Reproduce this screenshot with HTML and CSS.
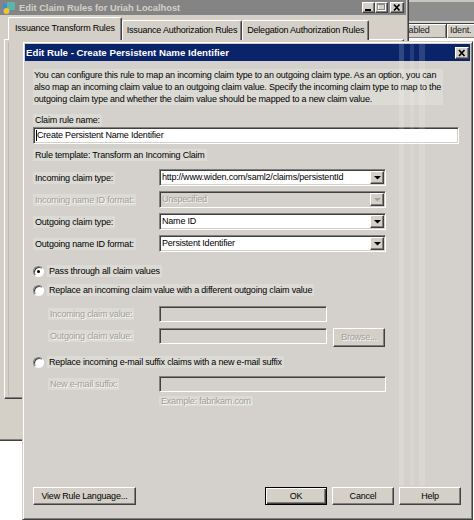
FILE: index.html
```html
<!DOCTYPE html>
<html>
<head>
<meta charset="utf-8">
<link rel="stylesheet" href="styles.css">
</head>
<body>
<div class="desk">
  <div class="win2">
    <div class="w2-title"></div>
    <div class="w2-sep"></div>
    <div class="lv-head">
      <span class="lv-col c-name"></span>
      <span class="lv-col c-en">Enabled</span>
      <span class="lv-col c-id">Ident.</span>
    </div>
  </div>

  <div class="win1">
    <div class="w1-title">
      <svg class="appicon" width="14" height="14" viewBox="0 0 14 14">
        <rect x="1" y="3" width="8" height="9" rx="1" fill="#3a8fd9"/>
        <rect x="5" y="1" width="8" height="8" rx="1" fill="#5fb4a8"/>
        <circle cx="4.5" cy="10" r="3" fill="#f2c230"/>
      </svg>
      <span class="w1-caption">Edit Claim Rules for Uriah Localhost</span>
      <span class="caps">
        <span class="capbtn"><svg width="11" height="9" viewBox="0 0 11 9"><rect x="2" y="6" width="6" height="2" fill="#000"/></svg></span>
        <span class="capbtn"><svg width="11" height="9" viewBox="0 0 11 9"><rect x="2.5" y="1.5" width="7" height="6" fill="none" stroke="#fff"/><rect x="1.5" y="0.5" width="7" height="6" fill="none" stroke="#8a8a8a"/><rect x="1" y="0" width="8" height="2" fill="#8a8a8a"/></svg></span>
        <span class="capbtn cl"><svg width="12" height="9" viewBox="0 0 12 9"><path d="M3 1.5 L8.5 7.5 M8.5 1.5 L3 7.5" stroke="#000" stroke-width="1.7"/></svg></span>
      </span>
    </div>
    <div class="w1-body">
      <div class="tabs">
        <span class="tab sel">Issuance Transform Rules</span>
        <span class="tab">Issuance Authorization Rules</span>
        <span class="tab">Delegation Authorization Rules</span>
      </div>
      <div class="tabpage"><div class="tabinner"></div></div>
    </div>
  </div>

  <div class="dlg">
    <div class="dlg-title">
      <span class="dlg-caption">Edit Rule - Create Persistent Name Identifier</span>
      <span class="capbtn x"><svg width="12" height="10" viewBox="0 0 12 10"><path d="M3 2 L8.5 8 M8.5 2 L3 8" stroke="#000" stroke-width="1.7"/></svg></span>
    </div>
    <div class="dlg-body">
      <p class="desc lbl">You can configure this rule to map an incoming claim type to an outgoing claim type. As an option, you can<br>also map an incoming claim value to an outgoing claim value. Specify the incoming claim type to map to the<br>outgoing claim type and whether the claim value should be mapped to a new claim value.</p>

      <div class="lbl blk l-name">Claim rule name:</div>
      <div class="edit e-name sunken"><span class="caret"></span>Create Persistent Name Identifier</div>

      <div class="lbl blk l-tpl">Rule template: Transform an Incoming Claim</div>

      <div class="fields">
        <div class="frow">
          <div class="lcol"><span class="lbl">Incoming claim type:</span></div>
          <div class="combo sunken"><span class="cv">http://www.widen.com/saml2/claims/persistentId</span><span class="dd raised"><svg width="7" height="4" viewBox="0 0 7 4"><polygon points="0,0 7,0 3.5,3.5" fill="#000"/></svg></span></div>
        </div>
        <div class="frow">
          <div class="lcol"><span class="lbl dis">Incoming name ID format:</span></div>
          <div class="combo sunken off"><span class="cv dis">Unspecified</span><span class="dd raised"><svg width="7" height="4" viewBox="0 0 7 4"><polygon points="0,0 7,0 3.5,3.5" fill="#a3a09b"/></svg></span></div>
        </div>
        <div class="frow">
          <div class="lcol"><span class="lbl">Outgoing claim type:</span></div>
          <div class="combo sunken"><span class="cv">Name ID</span><span class="dd raised"><svg width="7" height="4" viewBox="0 0 7 4"><polygon points="0,0 7,0 3.5,3.5" fill="#000"/></svg></span></div>
        </div>
        <div class="frow">
          <div class="lcol"><span class="lbl">Outgoing name ID format:</span></div>
          <div class="combo sunken"><span class="cv">Persistent Identifier</span><span class="dd raised"><svg width="7" height="4" viewBox="0 0 7 4"><polygon points="0,0 7,0 3.5,3.5" fill="#000"/></svg></span></div>
        </div>
      </div>

      <div class="radio r1"><span class="rb on"></span><span class="lbl">Pass through all claim values</span></div>
      <div class="radio r2"><span class="rb"></span><span class="lbl">Replace an incoming claim value with a different outgoing claim value</span></div>

      <div class="srow s1">
        <div class="lcol sub"><span class="lbl dis">Incoming claim value:</span></div>
        <div class="edit sunken off w-short"></div>
      </div>
      <div class="srow s2">
        <div class="lcol sub"><span class="lbl dis">Outgoing claim value:</span></div>
        <div class="edit sunken off w-short"></div>
        <div class="btn raised browse dis">Browse...</div>
      </div>

      <div class="radio r3"><span class="rb"></span><span class="lbl">Replace incoming e-mail suffix claims with a new e-mail suffix</span></div>

      <div class="srow s3">
        <div class="lcol sub"><span class="lbl dis">New e-mail suffix:</span></div>
        <div class="edit sunken off w-long"></div>
      </div>
      <div class="example"><span class="lbl dis">Example: fabrikam.com</span></div>

      <div class="btns">
        <div class="btn raised view">View Rule Language...</div>
        <div class="btn ok">OK</div>
        <div class="btn raised cancel">Cancel</div>
        <div class="btn raised help">Help</div>
      </div>
    </div>
  </div>

  <div class="ghost"></div>
</div>
</body>
</html>
```

FILE: styles.css
```css
* { box-sizing: border-box; }
html, body { margin: 0; padding: 0; }
body {
  width: 474px;
  height: 520px;
  overflow: hidden;
  background: #fff;
  font-family: "Liberation Sans", Arial, sans-serif;
  font-size: 9px;
  letter-spacing: -0.2px;
  color: #000;
}
.desk { position: relative; width: 474px; height: 520px; overflow: hidden; background: #fff; }

.raised {
  background: #d4d0c8;
  border: 1px solid;
  border-color: #fff #404040 #404040 #fff;
  box-shadow: inset -1px -1px #808080;
}
.sunken {
  background: #fff;
  border: 1px solid;
  border-color: #808080 #fff #fff #808080;
  box-shadow: inset 1px 1px #404040, inset -1px -1px #d4d0c8;
}
.sunken.off { background: #d4d1cc; }
.dis { color: #a19e99; text-shadow: 1px 1px 0 rgba(255,255,255,0.85); }

/* ---------- window behind (right) ---------- */
.win2 { position: absolute; left: 300px; top: 0; width: 190px; height: 90px; background: #fff; }
.w2-title { height: 21px; background: #8e8e8e; border-top: 2px solid #c8c5bf; }
.w2-sep { height: 3px; background: #d8d5d0; border-bottom: 1px solid #404040; }
.lv-head { display: flex; height: 14px; background: #d4d0c8; }
.lv-col {
  height: 14px; line-height: 13px; padding: 0 4px; white-space: nowrap; overflow: hidden;
  border-right: 1px solid #404040;
  box-shadow: inset 1px 1px #fff, inset -1px -1px #808080;
  color: #222;
}
.c-name { width: 94px; }
.c-en { width: 53px; }
.c-id { width: 40px; padding-left: 3px; }

/* ---------- main window behind ---------- */
.win1 {
  position: absolute; left: 0; top: 0; width: 409px; height: 441px;
  background: #d4d0c8;
  border-right: 1px solid #404040; border-bottom: 1px solid #404040;
  box-shadow: inset -1px -1px #808080;
  padding: 0 2px 2px 0;
}
.w1-title {
  height: 15px; background: #848484; color: #d4d0c8;
  display: flex; align-items: center; padding-left: 2px;
}
.appicon { flex: none; margin-right: 3px; }
.w1-caption { font-weight: bold; font-size: 9.3px; letter-spacing: 0; white-space: nowrap; }
.caps { margin-left: auto; display: flex; align-items: center; margin-right: 2px; }
.capbtn {
  width: 13px; height: 11px; display: flex; align-items: center; justify-content: center;
  background: #d4d0c8; border: 1px solid; border-color: #fff #404040 #404040 #fff;
  box-shadow: inset -1px -1px #808080;
}
.caps .capbtn svg { flex: none; }
.caps .cl { margin-left: 2px; width: 14px; }

.tabs { display: flex; align-items: flex-end; height: 25px; padding-left: 8px; position: relative; z-index: 1; margin-bottom: -1px; }
.tab {
  height: 20px; line-height: 19px; padding: 0 4px; white-space: nowrap;
  border-top: 1px solid #fff; border-left: 1px solid #fff; border-right: 1px solid #404040;
  box-shadow: inset -1px 0 #808080;
  border-radius: 2px 2px 0 0;
  background: #d4d0c8;
}
.tab.sel { height: 23px; line-height: 20px; padding: 0 6px; }
.tabpage {
  height: 360px; margin-left: 4px; margin-right: 2px;
  border: 1px solid; border-color: #fff #404040 #404040 #fff;
  box-shadow: inset -1px -1px #808080;
  padding: 2px;
}
.tabinner { height: 100%; border-left: 1px solid #bdbab4; margin-left: 1px; }

/* ---------- dialog ---------- */
.dlg {
  position: absolute; left: 22px; top: 41px; width: 451px; height: 479px;
  background: #d4d1cc;
  border: 1px solid; border-color: #d4d0c8 #404040 #404040 #d4d0c8;
  box-shadow: inset 1px 1px #fff, inset -1px -1px #808080;
  padding: 2px;
  display: flex; flex-direction: column;
}
.dlg-title {
  flex: none; height: 17px; background: #0a246a; color: #fff;
  display: flex; align-items: center; padding-left: 1px;
}
.dlg-caption { font-weight: bold; font-size: 9.7px; letter-spacing: 0; white-space: nowrap; }
.capbtn.x { margin-left: auto; margin-right: 1px; width: 14px; height: 12px; }

.dlg-body {
  flex: 1; display: flex; flex-direction: column; align-items: flex-start;
  padding: 8px 9px 12px 8px;
}
.lbl { background: #dcdad5; padding: 0 2px; line-height: 12px; white-space: nowrap; }
.desc { margin: 0; padding: 0 2px 0 1px; }
.blk { display: block; }
.l-name { margin-top: 9px; }
.e-name { width: 426px; height: 17px; margin-top: 1px; line-height: 15px; padding-left: 2px; display: flex; align-items: center; white-space: nowrap; }
.caret { width: 1px; height: 11px; background: #000; margin-right: 0; }
.l-tpl { margin-top: 5px; }

.fields { margin-top: 8px; display: flex; flex-direction: column; gap: 5px; }
.frow { display: flex; align-items: center; height: 17px; }
.lcol { width: 126px; flex: none; display: flex; }
.lcol.sub { padding-left: 15px; line-height: 16px; height: 16px; align-items: center; }
.combo { width: 227px; height: 17px; display: flex; align-items: center; }
.cv { flex: 1; padding-left: 2px; line-height: 15px; white-space: nowrap; overflow: hidden; }
.dd {
  flex: none; width: 14px; height: 13px; margin-right: 1px;
  display: flex; align-items: center; justify-content: center;
}

.radio { display: flex; align-items: center; height: 16px; }
.r1 { margin-top: 11px; }
.r2 { margin-top: 3px; }
.r3 { margin-top: 7px; }
.rb {
  position: relative; flex: none;
  width: 11px; height: 11px; border-radius: 50%;
  background: #fff;
  border: 1px solid; border-color: #808080 #fff #fff #808080;
  box-shadow: inset 1px 1px #404040;
  margin-right: 3px;
}
.rb.on::after {
  content: ""; position: absolute; left: 3px; top: 3px; width: 3px; height: 3px;
  border-radius: 50%; background: #000;
}

.srow { display: flex; align-items: flex-start; }
.s1 { margin-top: 8px; }
.s2 { margin-top: 6px; }
.s3 { margin-top: 6px; }
.edit.w-short { width: 168px; height: 16px; }
.edit.w-long { width: 227px; height: 16px; }
.example { margin-top: 3px; margin-left: 126px; }

.btn {
  height: 18px; line-height: 16px; text-align: center; white-space: nowrap;
}
.browse { width: 52px; height: 19px; line-height: 17px; margin-left: 6px; }
.btns { margin-top: auto; display: flex; width: 100%; }
.view { width: 103px; }
.ok {
  margin-left: auto; width: 62px;
  background: #d4d0c8;
  border: 1px solid #000;
  box-shadow: inset 1px 1px #fff, inset -1px -1px #404040, inset -2px -2px #808080;
}
.cancel, .help { width: 62px; margin-left: 5px; }

.ghost {
  position: absolute; left: 399px; top: 44px; width: 27px; height: 442px;
  pointer-events: none;
  background: linear-gradient(to right,
    rgba(255,255,255,0.16) 0 5px, transparent 5px 11px,
    rgba(255,255,255,0.11) 11px 15px, transparent 15px 20px,
    rgba(255,255,255,0.14) 20px 26px, transparent 26px);
}
```
